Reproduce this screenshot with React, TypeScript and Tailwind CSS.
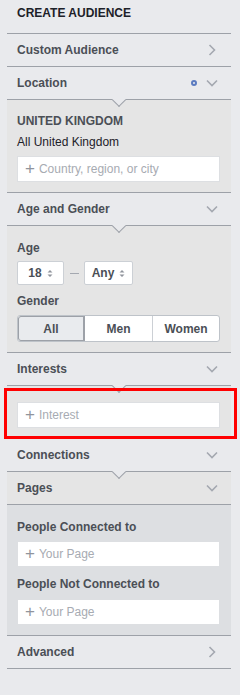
import React from 'react';

const Chevron = ({ dir }: { dir: 'down' | 'right' }) => (
  <svg width="14" height="14" viewBox="0 0 14 14" className="shrink-0">
    {dir === 'down' ? (
      <path d="M2 4.5 L7 9.5 L12 4.5" fill="none" stroke="#a4a8b0" strokeWidth="1.6" />
    ) : (
      <path d="M4.5 2 L9.5 7 L4.5 12" fill="none" stroke="#a4a8b0" strokeWidth="1.6" />
    )}
  </svg>
);

// header row of a section; `notch` draws the little arrow in the bottom line
const Header = ({
  title,
  dir = 'down',
  notch = false,
  dot = false,
  bg = 'bg-[#e9eaed]',
}: {
  title: string;
  dir?: 'down' | 'right';
  notch?: boolean;
  dot?: boolean;
  bg?: string;
}) => (
  <div className={`relative h-[33px] flex items-center pl-[10px] pr-[12px] border-b border-[#9da1a8] ${bg}`}>
    <span className="text-[12px] font-bold text-[#4b4f56]">{title}</span>
    <div className="ml-auto flex items-center gap-[8px]">
      {dot && <span className="w-[6px] h-[6px] rounded-full border-[2px] border-[#5b7bc0]" />}
      <Chevron dir={dir} />
    </div>
    {notch && (
      <span
        className={`absolute z-10 left-[107px] -bottom-[6px] w-[10px] h-[10px] rotate-45 border-r border-b border-[#9da1a8] ${bg}`}
      />
    )}
  </div>
);

const AddInput = ({ placeholder }: { placeholder: string }) => (
  <div className="h-[26px] bg-white border border-[#dddfe2] flex items-center pl-[7px] gap-[4px]">
    <span className="text-[17px] font-light leading-none text-[#90949c] -mt-[2px]">+</span>
    <span className="text-[12px] text-[#a7abb2]">{placeholder}</span>
  </div>
);

const Select = ({ value, w }: { value: string; w: string }) => (
  <div className={`h-[24px] ${w} bg-white border border-[#ccd0d5] rounded-[2px] flex items-center justify-center gap-[5px]`}>
    <span className="text-[12px] font-bold text-[#4b4f56]">{value}</span>
    <svg width="6" height="9" viewBox="0 0 6 9">
      <path d="M0.5 3.5 L3 1 L5.5 3.5 Z M0.5 5.5 L3 8 L5.5 5.5 Z" fill="#90949c" />
    </svg>
  </div>
);

const App: React.FC = () => {
  return (
    <div
      className="min-h-[695px] w-[240px] bg-[#e9eaed] pl-[7px] pr-[9px]"
      style={{ fontFamily: '"Liberation Sans", Arial, sans-serif' }}
    >
      <div className="h-[34px] flex items-center pl-[10px] border-b border-[#9da1a8]">
        <span className="text-[12px] font-bold text-[#1d2129] mt-[-7px]">CREATE AUDIENCE</span>
      </div>

      <Header title="Custom Audience" dir="right" />
      <Header title="Location" notch dot />
      <div className="bg-[#e5e5e5] pl-[10px] pr-[11px] pt-[14px] pb-[10px] border-b border-[#9da1a8]">
        <div className="text-[12px] font-bold text-[#4b4f56] leading-[15px]">UNITED KINGDOM</div>
        <div className="text-[12px] text-[#1d2129] leading-[15px] mt-[6px]">All United Kingdom</div>
        <div className="mt-[6px]">
          <AddInput placeholder="Country, region, or city" />
        </div>
      </div>

      <Header title="Age and Gender" notch />
      <div className="bg-[#e5e5e5] pl-[10px] pr-[11px] pt-[15px] pb-[10px] border-b border-[#9da1a8]">
        <div className="text-[12px] font-bold text-[#4b4f56] leading-[15px]">Age</div>
        <div className="mt-[5px] flex items-center">
          <Select value="18" w="w-[47px]" />
          <span className="w-[9px] h-px bg-[#a4a8b0] ml-[6px] mr-[5px]" />
          <Select value="Any" w="w-[49px]" />
        </div>
        <div className="text-[12px] font-bold text-[#4b4f56] leading-[15px] mt-[9px]">Gender</div>
        <div className="mt-[6px] h-[27px] flex bg-white border border-[#bec3c9] rounded-[3px] overflow-hidden">
          <div className="w-[67px] flex items-center justify-center bg-[#e9ebee] border-r border-[#9da1a8] shadow-[inset_0_0_0_1px_#9da1a8] rounded-l-[3px]">
            <span className="text-[12px] font-bold text-[#4b4f56]">All</span>
          </div>
          <div className="w-[68px] flex items-center justify-center border-r border-[#ccd0d5]">
            <span className="text-[12px] font-bold text-[#4b4f56]">Men</span>
          </div>
          <div className="flex-1 flex items-center justify-center">
            <span className="text-[12px] font-bold text-[#4b4f56]">Women</span>
          </div>
        </div>
      </div>

      <Header title="Interests" notch />
      <div className="relative">
        <div className="bg-[#e5e5e5] pl-[10px] pr-[11px] pt-[16px] pb-[11px]">
          <AddInput placeholder="Interest" />
        </div>
        <div className="absolute z-20 left-[-3px] right-[-6px] top-[2px] bottom-0 border-[3px] border-[#ff0000]" />
      </div>

      <Header title="Connections" notch />
      <Header title="Pages" bg="bg-[#e5e5e5]" />
      <div className="bg-[#dddfe2] pl-[10px] pr-[11px] pt-[15px] pb-[10px] border-b border-[#9da1a8]">
        <div className="text-[12px] font-bold text-[#4b4f56] leading-[15px]">People Connected to</div>
        <div className="mt-[6px]">
          <AddInput placeholder="Your Page" />
        </div>
        <div className="text-[12px] font-bold text-[#4b4f56] leading-[15px] mt-[10px]">People Not Connected to</div>
        <div className="mt-[7px]">
          <AddInput placeholder="Your Page" />
        </div>
      </div>

      <Header title="Advanced" dir="right" />
    </div>
  );
};

export default App;
